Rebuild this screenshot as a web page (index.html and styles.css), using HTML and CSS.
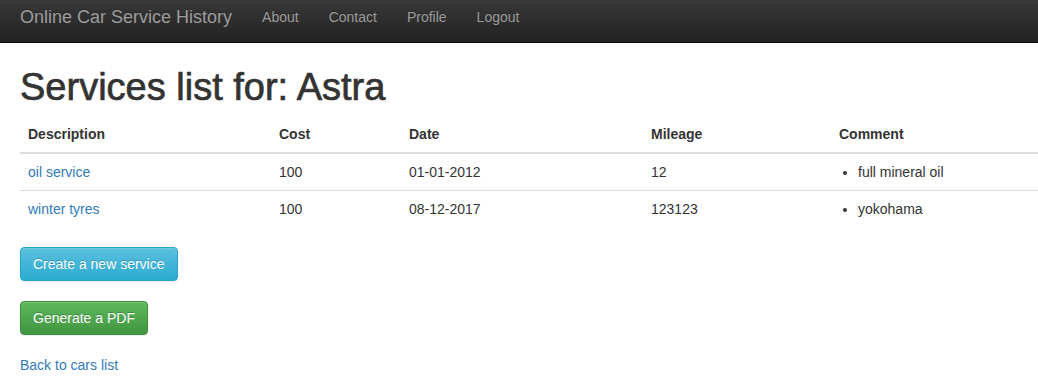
FILE: index.html
```html
<!DOCTYPE html>
<html lang="en">
<head>
  <meta charset="UTF-8" />
  <meta name="viewport" content="width=device-width, initial-scale=1.0" />
  <title>Services list for: Astra</title>
  <link rel="stylesheet" href="styles.css">
</head>
<body>
  <!-- Top navigation -->
  <nav class="navbar">
    <a class="navbar-brand" href="#">Online Car Service History</a>
    <ul class="navbar-nav">
      <li><a href="#">About</a></li>
      <li><a href="#">Contact</a></li>
      <li><a href="#">Profile</a></li>
      <li><a href="#">Logout</a></li>
    </ul>
  </nav>

  <div class="page">
    <h1>Services list for: Astra</h1>

    <table class="services-table">
      <thead>
        <tr>
          <th class="col-desc">Description</th>
          <th class="col-cost">Cost</th>
          <th class="col-date">Date</th>
          <th class="col-mileage">Mileage</th>
          <th>Comment</th>
        </tr>
      </thead>
      <tbody>
        <tr>
          <td><a href="#">oil service</a></td>
          <td>100</td>
          <td>01-01-2012</td>
          <td>12</td>
          <td><ul class="comment-list"><li>full mineral oil</li></ul></td>
        </tr>
        <tr>
          <td><a href="#">winter tyres</a></td>
          <td>100</td>
          <td>08-12-2017</td>
          <td>123123</td>
          <td><ul class="comment-list"><li>yokohama</li></ul></td>
        </tr>
      </tbody>
    </table>

    <div class="actions">
      <a class="btn btn-info" href="#">Create a new service</a>
      <a class="btn btn-success" href="#">Generate a PDF</a>
      <a class="back-link" href="#">Back to cars list</a>
    </div>
  </div>
</body>
</html>
```

FILE: styles.css
```css
body {
  font-family: "Liberation Sans", Arial, sans-serif;
  font-size: 14px;
  line-height: 20px;
  color: #333;
  background: #fff;
  margin: 0;
}
a {
  color: #337ab7;
  text-decoration: none;
}

/* navbar */
.navbar {
  display: flex;
  align-items: flex-start;
  height: 42px;
  background-image: linear-gradient(to bottom, #383838 0%, #222 100%);
  border-bottom: 1px solid #080808;
}
.navbar-brand {
  font-size: 18px;
  line-height: 20px;
  padding: 7px 15px 0 20px;
  color: #9d9d9d;
  text-shadow: 0 -1px 0 rgba(0, 0, 0, 0.25);
}
.navbar-nav {
  display: flex;
  list-style: none;
  margin: 0;
  padding: 0;
}
.navbar-nav a {
  display: block;
  padding: 7px 15px 0;
  color: #9d9d9d;
  text-shadow: 0 -1px 0 rgba(0, 0, 0, 0.25);
}

/* content */
.page {
  padding: 24px 0 0 20px;
}
h1 {
  font-size: 38px;
  font-weight: 400;
  line-height: 40px;
  margin: 0 0 9px;
  color: #333;
  -webkit-text-stroke: 0.7px #333;
}
.services-table {
  width: 100%;
  border-collapse: collapse;
  border-spacing: 0;
  margin-bottom: 20px;
}
.services-table th,
.services-table td {
  padding: 8px;
  text-align: left;
  vertical-align: top;
  line-height: 20px;
}
.services-table th {
  font-weight: bold;
  border-bottom: 2px solid #ddd;
}
.services-table td {
  border-top: 1px solid #ddd;
}
.services-table tbody tr:first-child td {
  border-top: 0;
}
.col-desc { width: 235px; }
.col-cost { width: 114px; }
.col-date { width: 226px; }
.col-mileage { width: 172px; }

.comment-list {
  margin: 0;
  padding-left: 19px;
}

.actions {
  display: flex;
  flex-direction: column;
  align-items: flex-start;
  gap: 20px;
}
.btn {
  display: inline-block;
  padding: 6px 12px;
  font-size: 14px;
  line-height: 20px;
  border: 1px solid transparent;
  border-radius: 4px;
  color: #fff;
  text-shadow: 0 -1px 0 rgba(0, 0, 0, 0.2);
  box-shadow: inset 0 1px 0 rgba(255, 255, 255, 0.15), 0 1px 1px rgba(0, 0, 0, 0.075);
}
.btn-info {
  background-image: linear-gradient(to bottom, #5bc0de 0%, #2aabd2 100%);
  border-color: #28a4c9;
}
.btn-success {
  background-image: linear-gradient(to bottom, #5cb85c 0%, #419641 100%);
  border-color: #3e8f3e;
}
.back-link {
  line-height: 20px;
}
```
